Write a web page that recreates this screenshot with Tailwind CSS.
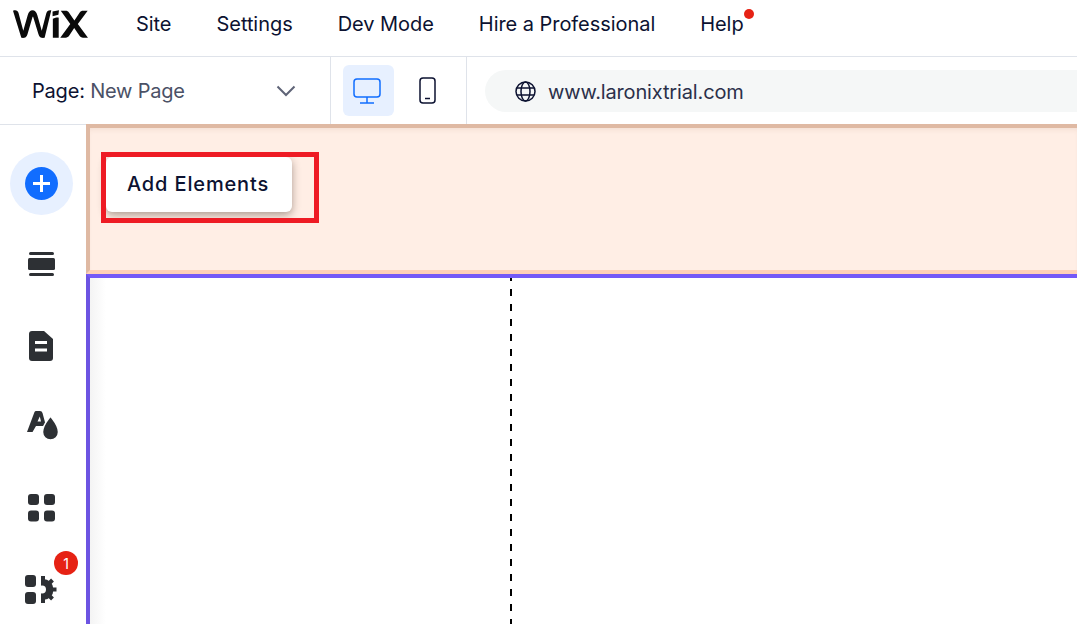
<!DOCTYPE html>
<html lang="en">
<head>
  <meta charset="UTF-8">
  <title>Wix Editor</title>
  <script src="https://cdn.jsdelivr.net/npm/@tailwindcss/browser@4"></script>
</head>
<body class="bg-white h-[624px] overflow-hidden font-['Inter',sans-serif] text-[#0c1231]">

  <!-- top menu -->
  <header class="h-[57px] border-b border-[#dfe3ea] flex items-center pb-[9px]">
    <svg class="ml-[13px] w-[76px] h-[30px]" viewBox="0 0 74 29" fill="#0a0a0a">
      <path d="M0 1.500c2.600-1 4.600-.4 5.400 2.300L10 21l4.300-15c.9-3.300 2.600-4.800 4.700-4.800s3.800 1.500 4.700 4.800L28 21l4.300-16.500C33 1.800 34.500.9 37.300 1.200L30.800 28c-3 .5-5.100-.4-6-3.600L19.600 7.500h-.5l-5 16.900c-.9 3.200-3 4.100-6 3.600z"/>
      <path d="M38.800 9.500c2.400-1.300 4.700-1.700 5.700-1.200v19.500h-5.700z"/>
      <path d="M38.500 2.300 44.800 1l-.6 4.600-5.700 1.300z"/>
      <path d="M46.500 1.500h4.600c1.600 0 2.600.6 3.500 2l5.200 7.700 5-7.700c.9-1.400 2-2 3.600-2h4.300l-9.600 13 9.900 13.300h-4.800c-1.600 0-2.700-.6-3.600-2l-5-7.400-4.800 7.400c-.9 1.400-2 2-3.600 2H46l9.800-13.300z"/>
    </svg>
    <nav class="flex items-center ml-[47px] text-[20px] tracking-[-0.05px] gap-[45px]">
      <span>Site</span>
      <span>Settings</span>
      <span>Dev Mode</span>
      <span>Hire a Professional</span>
      <span class="relative">Help<span class="absolute top-0 -right-[10px] w-[10px] h-[10px] rounded-full bg-[#e62214]"></span></span>
    </nav>
  </header>

  <!-- page / device / url bar -->
  <div class="h-[68px] border-b border-[#dfe3ea] flex">
    <div class="w-[331px] border-r border-[#dfe3ea] flex items-center pl-[32px] pr-[34px] pt-[1px] justify-between">
      <span class="text-[20px] tracking-[-0.2px]">Page: <span class="text-[#4b5166]">New Page</span></span>
      <svg class="w-[20px] h-[12px]" viewBox="0 0 20 12" fill="none" stroke="#5f6477" stroke-width="2"><path d="M1.500 1.500 10 10l8.500-8.500"/></svg>
    </div>
    <div class="w-[136px] border-r border-[#dfe3ea] flex items-center pl-[12px] gap-[25px]">
      <div class="w-[51px] h-[51px] rounded-[6px] bg-[#e7f0ff] flex items-center justify-center pr-[3px]">
        <svg class="w-[28px] h-[26px]" viewBox="0 0 28 26" fill="none" stroke="#116dff" stroke-width="1.500"><rect x="1" y="1" width="26" height="18" rx="3"/><path d="M14 19v6M7 25h14"/></svg>
      </div>
      <svg class="w-[17px] h-[27px]" viewBox="0 0 17 27" fill="none" stroke="#0c1231" stroke-width="1.500"><rect x="1" y="1" width="15" height="25" rx="3"/><path d="M6 21.500h5"/></svg>
    </div>
    <div class="flex-1 flex items-center pl-[18px]">
      <div class="flex-1 h-[42px] bg-[#f5f7f7] rounded-l-[21px] flex items-center pl-[30px] pt-[2px] gap-[12px]">
        <svg class="w-[21px] h-[21px]" viewBox="0 0 21 21" fill="none" stroke="#0c1231" stroke-width="1.500"><circle cx="10.500" cy="10.500" r="9.500"/><ellipse cx="10.500" cy="10.500" rx="4.500" ry="9.500"/><path d="M2 7h17M2 14h17"/></svg>
        <span class="text-[20px] tracking-[-0.15px] text-[#2b304a]">www.laronixtrial.com</span>
      </div>
    </div>
  </div>

  <div class="flex h-[499px]">
    <!-- left tools -->
    <aside class="w-[86px] shrink-0 flex flex-col items-center pt-[27px] pr-[4px]">
      <div class="w-[63px] h-[63px] rounded-full bg-[#e7f0ff] flex items-center justify-center">
        <svg class="w-[33px] h-[33px]" viewBox="0 0 33 33"><circle cx="16.500" cy="16.500" r="16.500" fill="#116dff"/><path d="M16.500 8v17M8 16.500h17" stroke="#fff" stroke-width="3"/></svg>
      </div>
      <svg class="mt-[37px] ml-[1px] w-[27px] h-[25px] shrink-0" viewBox="0 0 27 25" fill="#2d3034"><rect x="1" y="0" width="25" height="3" rx="1.500"/><rect x="0" y="6" width="27" height="12" rx="1.500"/><rect x="1" y="21" width="25" height="3" rx="1.500"/></svg>
      <svg class="mt-[54px] w-[24px] h-[30px] shrink-0" viewBox="0 0 24 30"><path d="M3 0h12l9 8v19a3 3 0 0 1-3 3H3a3 3 0 0 1-3-3V3a3 3 0 0 1 3-3z" fill="#2d3034"/><path d="M6 11.500h12M6 19h12" stroke="#fff" stroke-width="3"/></svg>
      <svg class="mt-[50px] w-[31px] h-[29px] ml-[3px] shrink-0" viewBox="0 0 31 29" fill="#2d3034">
        <path fill-rule="evenodd" d="M0 21 7.500 1Q8 0 9 0h4q2 0 2.500 2L19 15h-10L5.500 21zM10.500 10.500h3.500L12.800 5.500z"/>
        <path stroke="#fff" stroke-width="1.500" d="M23.500 5c3 4.500 8 9 8 16a8 8 0 0 1-16 0c0-7 5-11.500 8-16z"/>
      </svg>
      <svg class="mt-[54px] ml-[1px] w-[28px] h-[28px] shrink-0" viewBox="0 0 28 28" fill="#2d3034"><rect width="11" height="11" rx="3"/><rect x="16" width="11" height="11" rx="3"/><rect y="16.500" width="11" height="11" rx="3"/><rect x="16" y="16.500" width="11" height="11" rx="3"/></svg>
      <div class="relative mt-[53px] ml-[1px] w-[33px] h-[29px] shrink-0">
        <svg class="w-[33px] h-[29px]" viewBox="0 0 33 29" fill="#2d3034">
          <rect width="11" height="12" rx="3"/><rect y="17" width="11" height="12" rx="3"/>
          <path d="M18 4A10.500 10.500 0 0 1 18 25z"/>
          <path d="M18 14.500V1M18 14.500 27.500 5M18 14.500h13.500M18 14.500 27.500 24M18 14.500V28" stroke="#2d3034" stroke-width="4"/>
          <circle cx="17" cy="14.500" r="4" fill="#fff"/>
          <rect x="12" y="0" width="4" height="29" fill="#fff"/>
        </svg>
        <span class="absolute -top-[24px] left-[29px] w-[24px] h-[24px] rounded-full bg-[#e62214] text-white text-[14px] flex items-center justify-center">1</span>
      </div>
    </aside>

    <!-- canvas -->
    <main class="relative flex-1 min-w-0 flex flex-col -mt-[1px]">
      <section class="h-[150px] shrink-0 bg-[#ffeee5] border-[4px] border-r-0 border-[#dfb9a3] border-b-[#ffd0b8] shadow-[inset_0_4px_6px_-4px_rgba(120,70,40,0.15)] pl-[16px] pt-[29px]">
        <div class="w-[186px] h-[55px] bg-white rounded-[6px] shadow-[0_3px_8px_rgba(70,50,40,0.45)] flex items-center pl-[21px] pb-[2px] text-[20px] font-[450] tracking-[0.85px]">Add Elements</div>
      </section>
      <section class="flex-1 border-t-[4px] border-l-[4px] border-t-[#7559f7] border-l-[#6c54e2] bg-gradient-to-r from-[#f4f4f4] to-white to-[16px]"></section>
      <div class="absolute left-[424px] top-[154px] bottom-0 w-[2px] bg-[repeating-linear-gradient(to_bottom,black_0,black_3px,transparent_3px,transparent_11px,black_11px,black_15px)]"></div>
      <div class="absolute left-[15px] top-[28px] w-[218px] h-[71px] border-[5px] border-[#ee1b24]"></div>
    </main>
  </div>
</body>
</html>
